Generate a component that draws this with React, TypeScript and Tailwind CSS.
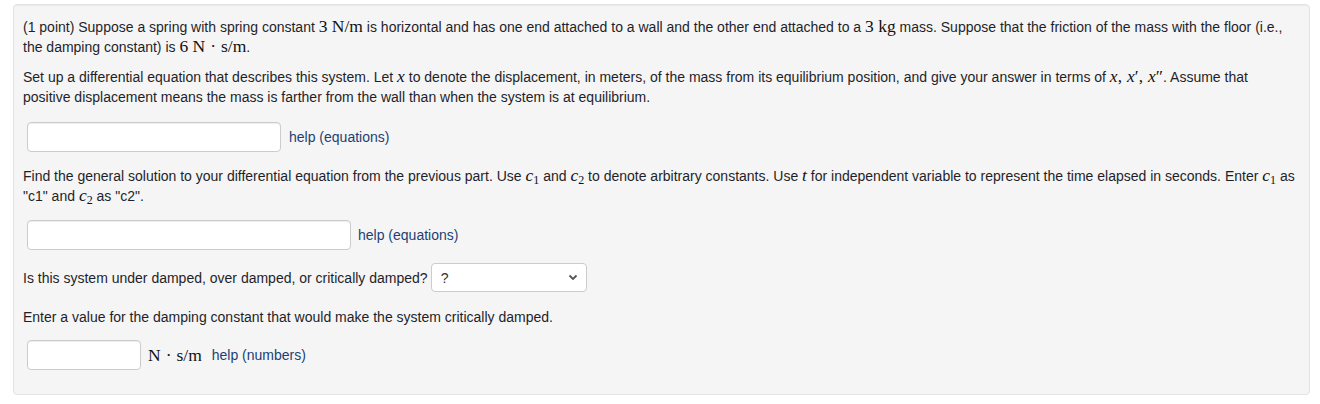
import React from "react";

const M = ({ children, className = "" }: { children: React.ReactNode; className?: string }) => (
  <span className={"font-['Liberation_Serif','DejaVu_Serif',serif] text-[17.5px] leading-[16px] text-[#111] " + className}>
    {children}
  </span>
);

const I = ({ children }: { children: React.ReactNode }) => <span className="italic">{children}</span>;

const Sub = ({ n }: { n: string }) => (
  <span className="text-[12px] relative top-[3px] not-italic">{n}</span>
);

const Dot = () => <span className="mx-[5px]">·</span>;

const Help = ({ children }: { children: React.ReactNode }) => (
  <span className="text-[#1d3f73]">{children}</span>
);

const Input = ({ w }: { w: string }) => (
  <div className={"h-[30px] bg-white border border-[#cccccc] rounded-[4px] shadow-[inset_0_1px_1px_rgba(0,0,0,0.075)] " + w} />
);

export default function App() {
  return (
    <div className="w-[1320px] h-[404px] bg-white pt-[4px] pl-[13px] font-['Liberation_Sans',Arial,sans-serif] text-[14px] leading-[20px] text-[#1f1f2a]">
      <div className="w-[1297px] h-[391px] bg-[#f5f5f5] border border-[#e3e3e3] rounded-[4px] shadow-[inset_0_1px_1px_rgba(0,0,0,0.05)] pt-[12px] pl-[9px] pr-[10px]">
        <p>
          (1 point) Suppose a spring with spring constant <M>3&nbsp;N/m</M> is horizontal and has one end attached to a wall and the other end attached to a <M>3&nbsp;kg</M> mass. Suppose that the friction of the mass with the floor (i.e., the damping constant) is <M>6&nbsp;N<Dot />s/m</M>.
        </p>
        <p className="mt-[10px]">
          Set up a differential equation that describes this system. Let <M><I>x</I></M> to denote the displacement, in meters, of the mass from its equilibrium position, and give your answer in terms of <M><I>x</I><span className="mr-[5px]">,</span><I>x</I>′<span className="mr-[5px]">,</span><I>x</I>″</M>. Assume that positive displacement means the mass is farther from the wall than when the system is at equilibrium.
        </p>
        <div className="mt-[15px] ml-[4px] flex items-center gap-[8px]">
          <Input w="w-[254px]" />
          <Help>help (equations)</Help>
        </div>
        <p className="mt-[14px]">
          Find the general solution to your differential equation from the previous part. Use <M><I>c</I><Sub n="1" /></M> and <M><I>c</I><Sub n="2" /></M> to denote arbitrary constants. Use <M><I>t</I></M> for independent variable to represent the time elapsed in seconds. Enter <M><I>c</I><Sub n="1" /></M> as "c1" and <M><I>c</I><Sub n="2" /></M> as "c2".
        </p>
        <div className="mt-[14px] ml-[4px] flex items-center gap-[7px]">
          <Input w="w-[324px]" />
          <Help>help (equations)</Help>
        </div>
        <div className="mt-[13px] flex items-center gap-[3px]">
          <span>Is this system under damped, over damped, or critically damped?</span>
          <div className="w-[156px] h-[29px] bg-white border border-[#cccccc] rounded-[4px] flex items-center justify-between pl-[9px] pr-[8px]">
            <span className="text-[#333]">?</span>
            <svg width="10" height="7" viewBox="0 0 10 7">
              <path d="M1.5 1.5 L5 5 L8.5 1.5" fill="none" stroke="#555" strokeWidth="1.8" />
            </svg>
          </div>
        </div>
        <p className="mt-[15px]">Enter a value for the damping constant that would make the system critically damped.</p>
        <div className="mt-[13px] ml-[4px] flex items-center">
          <Input w="w-[114px]" />
          <M className="ml-[7px]">N<Dot />s/m</M>
          <span className="ml-[10px]"><Help>help (numbers)</Help></span>
        </div>
      </div>
    </div>
  );
}
